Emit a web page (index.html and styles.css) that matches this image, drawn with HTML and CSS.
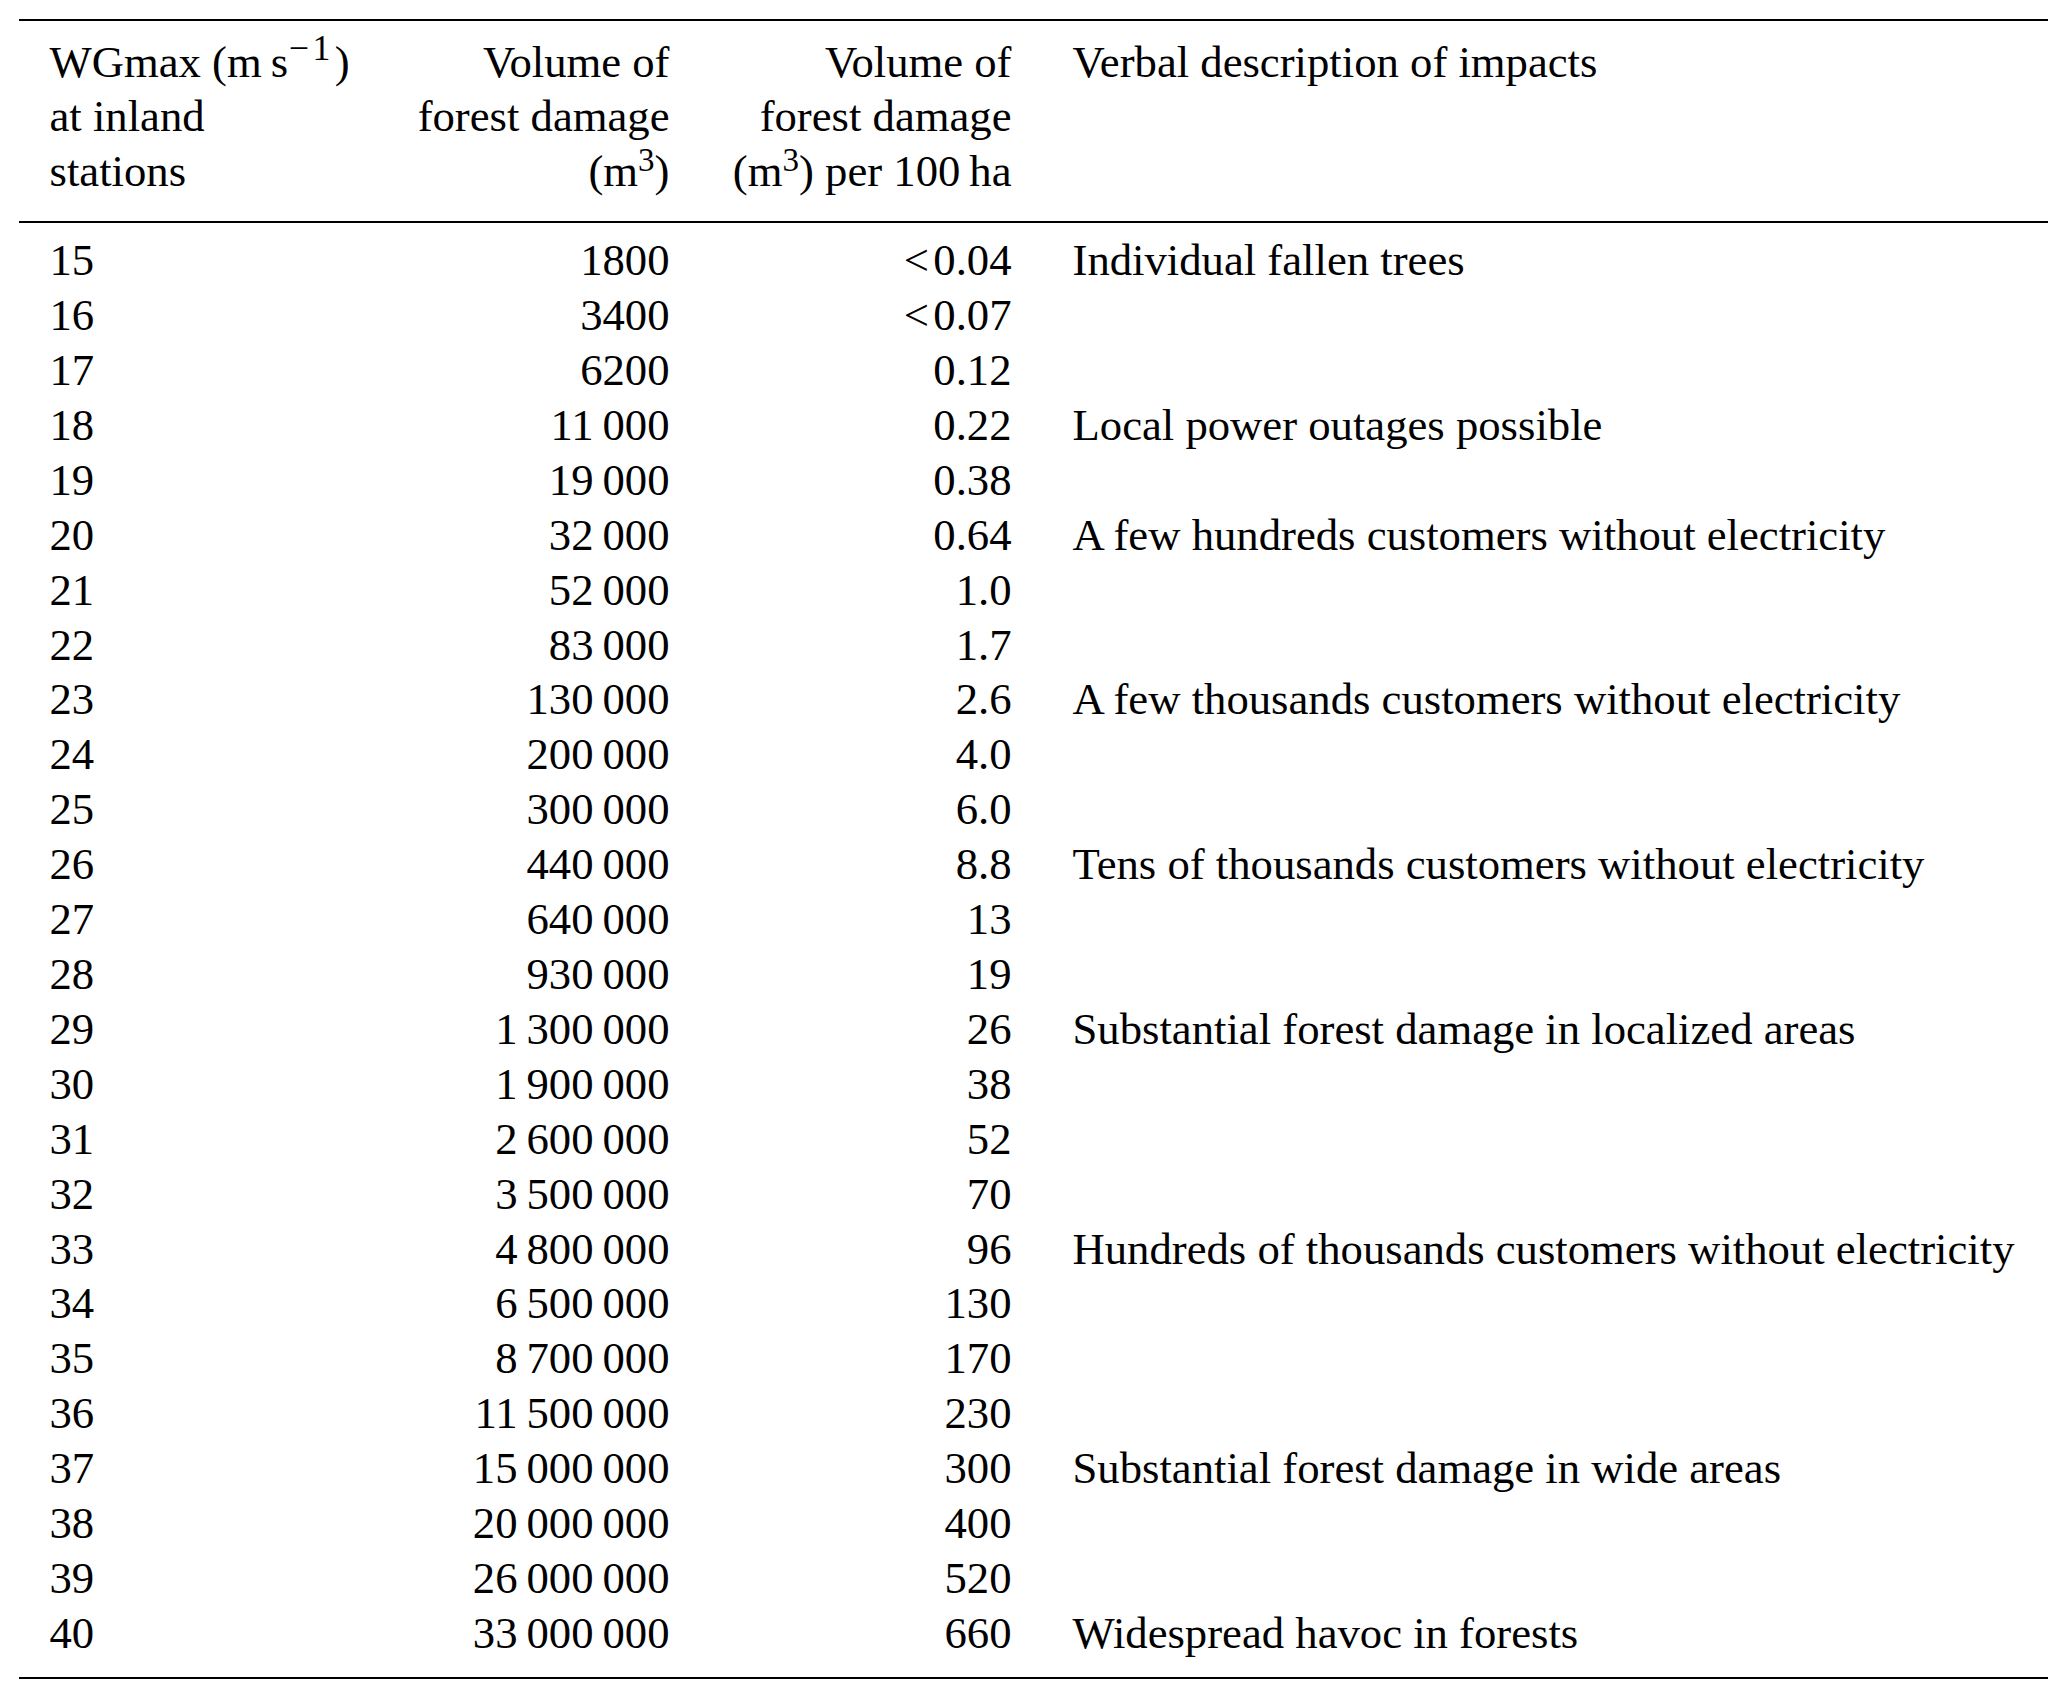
FILE: index.html
```html
<!DOCTYPE html>
<html lang="en">
<head>
<meta charset="utf-8">
<title>Forest damage table</title>
<link rel="stylesheet" href="styles.css">
</head>
<body>
<table class="tbl">
  <colgroup>
    <col class="c1"><col class="c2"><col class="c3"><col class="c4">
  </colgroup>
  <thead>
    <tr>
      <th class="l">WGmax (m&#8201;s<sup class="neg">−1</sup>)<br>at inland<br>stations</th>
      <th class="r">Volume of<br>forest damage<br>(m<sup>3</sup>)</th>
      <th class="r">Volume of<br>forest damage<br>(m<sup>3</sup>) per 100&#8201;ha</th>
      <th class="l">Verbal description of impacts</th>
    </tr>
  </thead>
  <tbody>
    <tr><td>15</td><td class="r">1800</td><td class="r"><span class="lt">&lt;</span>0.04</td><td>Individual fallen trees</td></tr>
    <tr><td>16</td><td class="r">3400</td><td class="r"><span class="lt">&lt;</span>0.07</td><td></td></tr>
    <tr><td>17</td><td class="r">6200</td><td class="r">0.12</td><td></td></tr>
    <tr><td>18</td><td class="r">11&#8201;000</td><td class="r">0.22</td><td>Local power outages possible</td></tr>
    <tr><td>19</td><td class="r">19&#8201;000</td><td class="r">0.38</td><td></td></tr>
    <tr><td>20</td><td class="r">32&#8201;000</td><td class="r">0.64</td><td>A few hundreds customers without electricity</td></tr>
    <tr><td>21</td><td class="r">52&#8201;000</td><td class="r">1.0</td><td></td></tr>
    <tr><td>22</td><td class="r">83&#8201;000</td><td class="r">1.7</td><td></td></tr>
    <tr><td>23</td><td class="r">130&#8201;000</td><td class="r">2.6</td><td>A few thousands customers without electricity</td></tr>
    <tr><td>24</td><td class="r">200&#8201;000</td><td class="r">4.0</td><td></td></tr>
    <tr><td>25</td><td class="r">300&#8201;000</td><td class="r">6.0</td><td></td></tr>
    <tr><td>26</td><td class="r">440&#8201;000</td><td class="r">8.8</td><td>Tens of thousands customers without electricity</td></tr>
    <tr><td>27</td><td class="r">640&#8201;000</td><td class="r">13</td><td></td></tr>
    <tr><td>28</td><td class="r">930&#8201;000</td><td class="r">19</td><td></td></tr>
    <tr><td>29</td><td class="r">1&#8201;300&#8201;000</td><td class="r">26</td><td>Substantial forest damage in localized areas</td></tr>
    <tr><td>30</td><td class="r">1&#8201;900&#8201;000</td><td class="r">38</td><td></td></tr>
    <tr><td>31</td><td class="r">2&#8201;600&#8201;000</td><td class="r">52</td><td></td></tr>
    <tr><td>32</td><td class="r">3&#8201;500&#8201;000</td><td class="r">70</td><td></td></tr>
    <tr><td>33</td><td class="r">4&#8201;800&#8201;000</td><td class="r">96</td><td>Hundreds of thousands customers without electricity</td></tr>
    <tr><td>34</td><td class="r">6&#8201;500&#8201;000</td><td class="r">130</td><td></td></tr>
    <tr><td>35</td><td class="r">8&#8201;700&#8201;000</td><td class="r">170</td><td></td></tr>
    <tr><td>36</td><td class="r">11&#8201;500&#8201;000</td><td class="r">230</td><td></td></tr>
    <tr><td>37</td><td class="r">15&#8201;000&#8201;000</td><td class="r">300</td><td>Substantial forest damage in wide areas</td></tr>
    <tr><td>38</td><td class="r">20&#8201;000&#8201;000</td><td class="r">400</td><td></td></tr>
    <tr><td>39</td><td class="r">26&#8201;000&#8201;000</td><td class="r">520</td><td></td></tr>
    <tr><td>40</td><td class="r">33&#8201;000&#8201;000</td><td class="r">660</td><td>Widespread havoc in forests</td></tr>
  </tbody>
</table>
</body>
</html>
```

FILE: styles.css
```css
html, body {
  margin: 0;
  padding: 0;
  background: #ffffff;
}

body {
  padding: 19px 0 0 19px;
  font-family: "Liberation Serif", "Times New Roman", serif;
  font-size: 44.7px;
  line-height: 54.9px;
  color: #000000;
}

.tbl {
  width: 2029px;
  table-layout: fixed;
  border-collapse: collapse;
  border-top: 2px solid #000;
  border-bottom: 2px solid #000;
}

.c1 { width: 367px; }
.c2 { width: 314px; }
.c3 { width: 342px; }
.c4 { width: 1006px; }

.tbl th,
.tbl td {
  padding: 0 30.5px;
  font-weight: normal;
  vertical-align: top;
  white-space: nowrap;
  text-align: left;
}

.tbl thead th {
  padding-top: 13.5px;
  padding-bottom: 21.5px;
  border-bottom: 2px solid #000;
}

.tbl tbody tr:first-child td {
  padding-top: 10.5px;
}

.tbl tbody tr:last-child td {
  padding-bottom: 16px;
}

.tbl .r {
  text-align: right;
}

.tbl .l {
  text-align: left;
}

sup {
  font-size: 0.74em;
  line-height: 0;
  vertical-align: 0.45em;
}

sup.neg {
  font-size: 0.8em;
  letter-spacing: 0.1em;
  margin-left: 0.02em;
  margin-right: 0.02em;
}

.lt {
  margin-right: 0.1em;
}
```
